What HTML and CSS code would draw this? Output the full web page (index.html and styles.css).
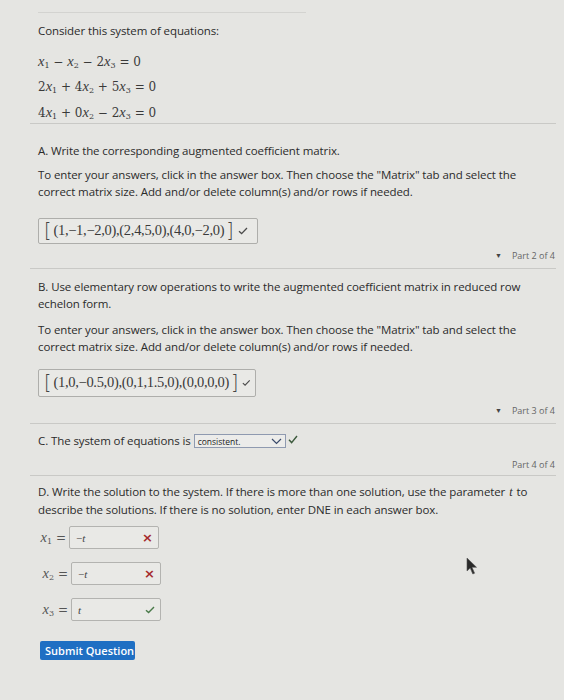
FILE: index.html
```html
<!DOCTYPE html>
<html>
<head>
<meta charset="utf-8">
<link rel="stylesheet" href="styles.css">
</head>
<body>
<div class="page">
  <div class="topline"></div>
  <section class="intro">
    <p class="txt">Consider this system of equations:</p>
    <div class="eqs">
      <div class="eq"><i>x</i><sub>1</sub> − <i>x</i><sub>2</sub> − 2<i>x</i><sub>3</sub> = 0</div>
      <div class="eq">2<i>x</i><sub>1</sub> + 4<i>x</i><sub>2</sub> + 5<i>x</i><sub>3</sub> = 0</div>
      <div class="eq">4<i>x</i><sub>1</sub> + 0<i>x</i><sub>2</sub> − 2<i>x</i><sub>3</sub> = 0</div>
    </div>
  </section>
  <div class="rule"></div>
  <section class="part partA">
    <p class="txt">A. Write the corresponding augmented coefficient matrix.</p>
    <p class="txt gap">To enter your answers, click in the answer box. Then choose the "Matrix" tab and select the correct matrix size. Add and/or delete column(s) and/or rows if needed.</p>
    <div class="ans"><span class="br">[</span><span class="m">(1,−1,−2,0),(2,4,5,0),(4,0,−2,0)</span><span class="br">]</span><svg class="ck" width="10" height="8" viewBox="0 0 10 8"><path d="M1 4.2 L3.6 6.6 L9 1" fill="none" stroke="#4b4b4b" stroke-width="1.3"/></svg></div>
  </section>
  <div class="parthead"><span class="tri">▼</span>Part 2 of 4</div>
  <div class="rule"></div>
  <section class="part partB">
    <p class="txt">B. Use elementary row operations to write the augmented coefficient matrix in reduced row echelon form.</p>
    <p class="txt gapB">To enter your answers, click in the answer box. Then choose the "Matrix" tab and select the correct matrix size. Add and/or delete column(s) and/or rows if needed.</p>
    <div class="ans"><span class="br">[</span><span class="m">(1,0,−0.5,0),(0,1,1.5,0),(0,0,0,0)</span><span class="br">]</span><svg class="ck" width="10" height="8" viewBox="0 0 10 8"><path d="M1 4.2 L3.6 6.6 L9 1" fill="none" stroke="#4b4b4b" stroke-width="1.3"/></svg></div>
  </section>
  <div class="parthead ph3"><span class="tri">▼</span>Part 3 of 4</div>
  <div class="rule"></div>
  <section class="partC">
    <span class="txt">C. The system of equations is</span>
    <span class="sel">consistent.<svg width="11" height="7" viewBox="0 0 11 7"><path d="M1 1 L5.5 5.5 L10 1" fill="none" stroke="#3a4a6a" stroke-width="1.2"/></svg></span><svg class="ck2" width="10" height="9" viewBox="0 0 10 9"><path d="M1 4.8 L3.6 7.6 L9 1" fill="none" stroke="#3c5a3c" stroke-width="1.4"/></svg>
  </section>
  <div class="parthead ph4">Part 4 of 4</div>
  <div class="rule"></div>
  <section class="part partD">
    <p class="txt"><span>D. Write the solution to the system. If there is more than one solution, use the parameter</span><span class="mi">t</span><span>to</span> <span>describe the solutions. If there is no solution, enter DNE in each answer box.</span></p>
    <div class="rows">
      <div class="row r1"><span class="lab"><i>x</i><sub>1</sub> =</span><span class="box"><span class="v">−<i>t</i></span><span class="x">×</span></span></div>
      <div class="row r2"><span class="lab"><i>x</i><sub>2</sub> =</span><span class="box"><span class="v">−<i>t</i></span><span class="x">×</span></span></div>
      <div class="row r3"><span class="lab"><i>x</i><sub>3</sub> =</span><span class="box"><span class="v"><i>t</i></span><svg class="ck3" width="10" height="8" viewBox="0 0 10 8"><path d="M1 4.2 L3.6 6.6 L9 1" fill="none" stroke="#4a7a4a" stroke-width="1.4"/></svg></span></div>
    </div>
    <button class="submit">Submit Question</button>
  </section>
  <svg class="cursor" width="12" height="18" viewBox="0 0 12 18"><path d="M1 1 L1 14 L4.2 11 L6.8 17 L8.6 16.2 L6 10.3 L10.5 10.3 Z" fill="#2a2a2a" stroke="#555" stroke-width="0.6"/></svg>
</div>
</body>
</html>
```
FILE: styles.css
```css
html, body { margin: 0; padding: 0; }
body {
  background: #e5e5e2;
  font-family: "Open Sans", "Noto Sans", sans-serif;
  color: #2b2b2b;
  width: 564px;
  height: 700px;
  overflow: hidden;
}
.page { position: relative; padding: 12px 8px 0 30px; }
.topline { height: 1px; background: #d3d3d0; margin: 0 250px 0 8px; }
.txt { margin: 0; font-size: 11.5px; line-height: 17.5px; letter-spacing: -0.1px; }
.gap { margin-top: 6px; }
.gapB { margin-top: 8px; }
.intro { padding: 9px 0 0 8px; margin-bottom: -2px; }
.eqs { margin-top: 9px; }
.eq {
  font-family: "DejaVu Serif", "Liberation Serif", serif;
  font-size: 12px; height: 25.5px; line-height: 25.5px; color: #3a3a3a;
  white-space: nowrap;
}
.eq i, .lab i, .v i { font-family: "Liberation Serif", serif; font-style: italic; font-size: 14.5px; }
sub { font-size: 8px; line-height: 0; vertical-align: -2px; }
.rule { height: 1px; background: #c9c9c6; }
.part { padding-left: 8px; }
.partA { padding-top: 18px; }
.ans {
  display: inline-flex; align-items: center; white-space: nowrap;
  margin-top: 17px; height: 26px; padding: 0 4px 0 5px; box-sizing: border-box;
  border: 1px solid #aeaeab; border-radius: 2px; background: #e9e9e6;
  font-family: "Liberation Serif", serif; color: #3a3a3a;
}
.partA .ans { width: 220px; }
.partB .ans { width: 218px; height: 28px; margin-top: 13px; }
.br { font-family: "DejaVu Sans", sans-serif; font-size: 19px; font-weight: 300; line-height: 1; color: #444; }
.m { font-family: "Liberation Serif", serif; font-size: 14.5px; letter-spacing: -0.3px; padding: 0 2px; }
.ck { margin-left: 4px; }
.parthead {
  text-align: right; font-size: 9px; color: #666; height: 24px; line-height: 24px;
  padding-right: 1px;
}
.tri { font-size: 7px; color: #444; margin-right: 10px; vertical-align: 1px; }
.partB { padding-top: 9px; }
.ph3 { margin-top: 2px; }
.partC { display: flex; align-items: center; padding: 4px 0 0 8px; height: 27px; }
.sel {
  display: inline-flex; align-items: center; justify-content: space-between;
  margin-left: 3px; height: 14px; padding: 0 3px;
  border: 1px solid #8f9ab0; background: #ececea;
  font-size: 8.5px; color: #222; box-sizing: border-box; width: 92px;
}
.ck2 { margin-left: 2px; margin-top: -4px; }
.ph4 { height: 20px; line-height: 20px; margin-top: 0; }
.partD { padding-top: 7px; }
.mi { font-family: "Liberation Serif", serif; font-style: italic; font-size: 12px; margin: 0 4px; }
.rows { margin-top: 1px; }
.row { display: flex; align-items: center; height: 36px; }
.lab {
  font-family: "DejaVu Serif", serif; font-size: 12px; color: #555; white-space: nowrap;
  width: 28px; text-align: right; margin-right: 3px;
}
.row.r2 .lab, .row.r3 .lab { width: 30px; }
.box {
  display: flex; align-items: center; justify-content: space-between;
  width: 90px; height: 23px; padding: 0 5px 0 6px; box-sizing: border-box;
  border: 1px solid #b3b3b0; border-radius: 2px; background: #e9e9e6;
  font-family: "Liberation Serif", serif; font-size: 11px; color: #444;
}
.box .v i { font-size: 11px; }
.x { color: #a52a2a; font-size: 13px; font-weight: bold; font-family: "DejaVu Sans", sans-serif; }
.submit {
  display: block; white-space: nowrap;
  margin-top: 13px; margin-left: 2px;
  background: #1f6fc3; color: #fff; border: 0; border-radius: 2px;
  font-family: "Open Sans", sans-serif; font-weight: 600; font-size: 11px;
  padding: 0 5px; height: 19px; width: 95px;
}
.cursor { position: absolute; left: 466px; top: 557px; }
```
